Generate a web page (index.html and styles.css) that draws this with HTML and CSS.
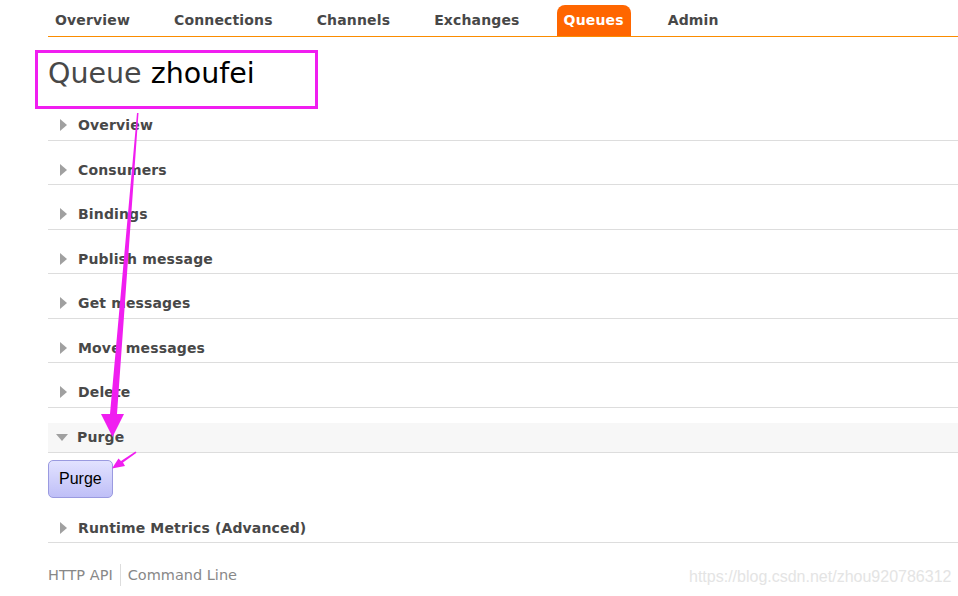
FILE: index.html
```html
<!DOCTYPE html>
<html lang="en">
<head>
    <meta charset="UTF-8">
    <title>RabbitMQ Management - Queue zhoufei</title>
    <link rel="stylesheet" href="styles.css">
</head>
<body>
    <div class="page">
        <ul class="menu">
            <li><a href="#">Overview</a></li>
            <li><a href="#">Connections</a></li>
            <li><a href="#">Channels</a></li>
            <li><a href="#">Exchanges</a></li>
            <li><a href="#" class="selected">Queues</a></li>
            <li><a href="#">Admin</a></li>
        </ul>

        <h1>Queue <b>zhoufei</b></h1>

        <div class="section"><h2>Overview</h2></div>
        <div class="section"><h2>Consumers</h2></div>
        <div class="section"><h2>Bindings</h2></div>
        <div class="section"><h2>Publish message</h2></div>
        <div class="section"><h2>Get messages</h2></div>
        <div class="section"><h2>Move messages</h2></div>
        <div class="section"><h2>Delete</h2></div>
        <div class="section open">
            <h2>Purge</h2>
            <div class="hider">
                <button type="button">Purge</button>
            </div>
        </div>
        <div class="section"><h2>Runtime Metrics (Advanced)</h2></div>

        <ul class="footer">
            <li><a href="#">HTTP API</a></li>
            <li><a href="#">Command Line</a></li>
        </ul>
    </div>

    <!-- screenshot annotations -->
    <svg class="annot" width="958" height="596" viewBox="0 0 958 596">
        <rect x="36.5" y="51.5" width="280" height="56" fill="none" stroke="#f01ef0" stroke-width="3"/>
        <polygon fill="#f01ef0" points="137,113 138.5,113 117,414 124,414 112.5,437 101,414 110,414"/>
        <polygon fill="#f01ef0" points="135.5,451.5 136.5,452.8 123,462.5 125,466 112,468.5 118.5,458.5 121,461"/>
    </svg>
    <div class="watermark">https://blog.csdn.net/zhou920786312</div>
</body>
</html>
```

FILE: styles.css
```css
body {
    margin: 0;
    font-family: "DejaVu Sans", Verdana, sans-serif;
    color: #484848;
    background: #fff;
}

a {
    color: inherit;
    text-decoration: none;
}

.page {
    padding-left: 48px;
}

/* top menu */
.menu {
    display: flex;
    list-style: none;
    margin: 0;
    padding: 5px 0 0;
    border-bottom: 1px solid #fb8c00;
}

.menu li {
    margin-right: 30px;
}

.menu a {
    display: block;
    padding: 0 7px;
    line-height: 31px;
    font-size: 14px;
    font-weight: bold;
    letter-spacing: 0.15px;
    color: #484848;
}

.menu a.selected {
    background-color: #ff6600;
    color: #fff;
    border-radius: 8px 8px 0 0;
}

h1 {
    margin: 20px 0 0;
    padding-bottom: 5px;
    font-size: 28.5px;
    line-height: 34px;
    font-weight: normal;
    color: #484848;
}

h1 b {
    font-weight: normal;
    color: #000;
}

/* collapsible sections */
.section {
    margin-top: 14.57px;
}

.section h2 {
    display: flex;
    align-items: center;
    margin: 0;
    height: 29px;
    font-size: 14px;
    font-weight: bold;
    letter-spacing: 0.15px;
    border-bottom: 1px solid #ddd;
}

.section h2::before {
    content: "";
    width: 0;
    height: 0;
    border-left: 7px solid #a0a0a0;
    border-top: 6px solid transparent;
    border-bottom: 6px solid transparent;
    margin: 0 11px 0 12px;
}

.section.open h2 {
    background-color: #f7f7f7;
}

.section.open h2::before {
    border-left: 6.5px solid transparent;
    border-right: 6.5px solid transparent;
    border-top: 7px solid #a0a0a0;
    border-bottom: 0;
    margin: 0 9px 0 8px;
}

.hider {
    padding: 7px 0 1.4px;
}

.hider button {
    display: block;
    padding: 9px 10px;
    font-family: "Liberation Sans", Arial, sans-serif;
    font-size: 16px;
    line-height: 18px;
    color: #000;
    background: linear-gradient(#e2e2ff, #bfbff7);
    border: 1px solid #9a9ae0;
    border-radius: 5px;
}

/* footer links */
.footer {
    display: flex;
    list-style: none;
    margin: 21px 0 0;
    padding: 0;
    font-size: 14.5px;
    line-height: 22px;
    color: #888;
}

.footer li {
    padding-right: 7px;
}

.footer li + li {
    border-left: 1px solid #ddd;
    padding-left: 7px;
}

.annot {
    position: absolute;
    top: 0;
    left: 0;
    pointer-events: none;
}

.watermark {
    position: absolute;
    left: 689px;
    top: 567px;
    font-family: "Liberation Sans", Arial, sans-serif;
    font-size: 16px;
    line-height: 20px;
    color: #e4e4e4;
}
```
